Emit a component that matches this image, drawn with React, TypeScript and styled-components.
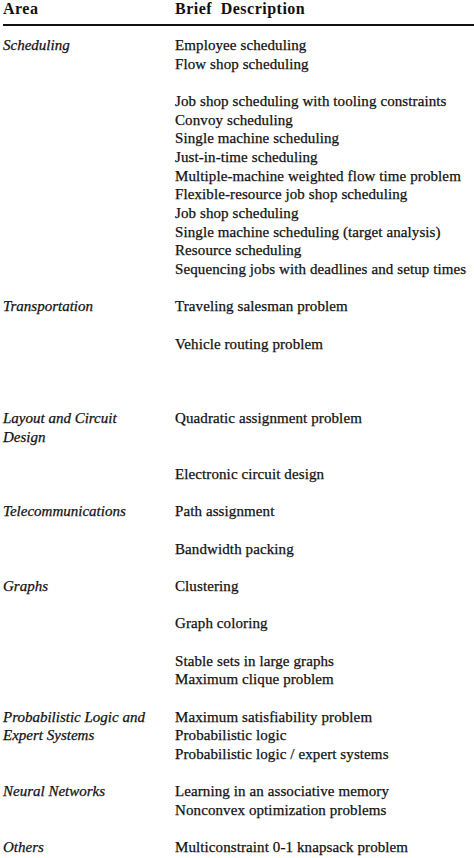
import React from "react";
import styled, { createGlobalStyle } from "styled-components";

const GlobalStyle = createGlobalStyle`
  html, body {
    margin: 0;
    padding: 0;
    background: #ffffff;
  }
  body {
    font-family: "Liberation Serif", "Times New Roman", serif;
    color: #111111;
  }
`;

const LINE = 18.67;

const Page = styled.div`
  width: 474px;
  padding-left: 3px;
  box-sizing: border-box;
`;

const Header = styled.div`
  display: grid;
  grid-template-columns: 172px 1fr;
  height: 24px;
  border-bottom: 2px solid #111;
  font-weight: 700;
  font-size: 16px;
  line-height: 18px;
  letter-spacing: 0.5px;
`;

const HeadCell = styled.div`
  word-spacing: 4px;
`;

const Body = styled.div`
  padding-top: 10px;
`;

const Section = styled.div<{ $gap: number }>`
  display: grid;
  grid-template-columns: 172px 1fr;
  margin-bottom: ${(p) => p.$gap * LINE}px;
  font-size: 15px;
  line-height: ${LINE}px;
  -webkit-text-stroke: 0.25px #111;
`;

const AreaCell = styled.div`
  font-style: italic;
`;

const ItemCell = styled.div`
  letter-spacing: 0.1px;
`;

const Line = styled.div`
  height: ${LINE}px;
  white-space: nowrap;
`;

type Row = { area: string[]; items: string[]; gap: number };

const rows: Row[] = [
  {
    area: ["Scheduling"],
    items: [
      "Employee scheduling",
      "Flow shop scheduling",
      "",
      "Job shop scheduling with tooling constraints",
      "Convoy scheduling",
      "Single machine scheduling",
      "Just-in-time scheduling",
      "Multiple-machine weighted flow time problem",
      "Flexible-resource job shop scheduling",
      "Job shop scheduling",
      "Single machine scheduling (target analysis)",
      "Resource scheduling",
      "Sequencing jobs with deadlines and setup times",
    ],
    gap: 1,
  },
  {
    area: ["Transportation"],
    items: ["Traveling salesman problem", "", "Vehicle routing problem"],
    gap: 3,
  },
  {
    area: ["Layout and Circuit", "Design"],
    items: ["Quadratic assignment problem", "", "", "Electronic circuit design"],
    gap: 1,
  },
  {
    area: ["Telecommunications"],
    items: ["Path assignment", "", "Bandwidth packing"],
    gap: 1,
  },
  {
    area: ["Graphs"],
    items: [
      "Clustering",
      "",
      "Graph coloring",
      "",
      "Stable sets in large graphs",
      "Maximum clique problem",
    ],
    gap: 1,
  },
  {
    area: ["Probabilistic Logic and", "Expert Systems"],
    items: [
      "Maximum satisfiability problem",
      "Probabilistic logic",
      "Probabilistic logic / expert systems",
    ],
    gap: 1,
  },
  {
    area: ["Neural Networks"],
    items: ["Learning in an associative memory", "Nonconvex optimization problems"],
    gap: 1,
  },
  {
    area: ["Others"],
    items: ["Multiconstraint 0-1 knapsack problem"],
    gap: 0,
  },
];

const App = () => {
  return (
    <Page>
      <GlobalStyle />
      <Header>
        <HeadCell>Area</HeadCell>
        <HeadCell>Brief Description</HeadCell>
      </Header>
      <Body>
        {rows.map((r) => (
          <Section key={r.area.join(" ")} $gap={r.gap}>
            <AreaCell>
              {r.area.map((a) => (
                <Line key={a}>{a}</Line>
              ))}
            </AreaCell>
            <ItemCell>
              {r.items.map((t, i) => (
                <Line key={i}>{t}</Line>
              ))}
            </ItemCell>
          </Section>
        ))}
      </Body>
    </Page>
  );
};

export default App;
